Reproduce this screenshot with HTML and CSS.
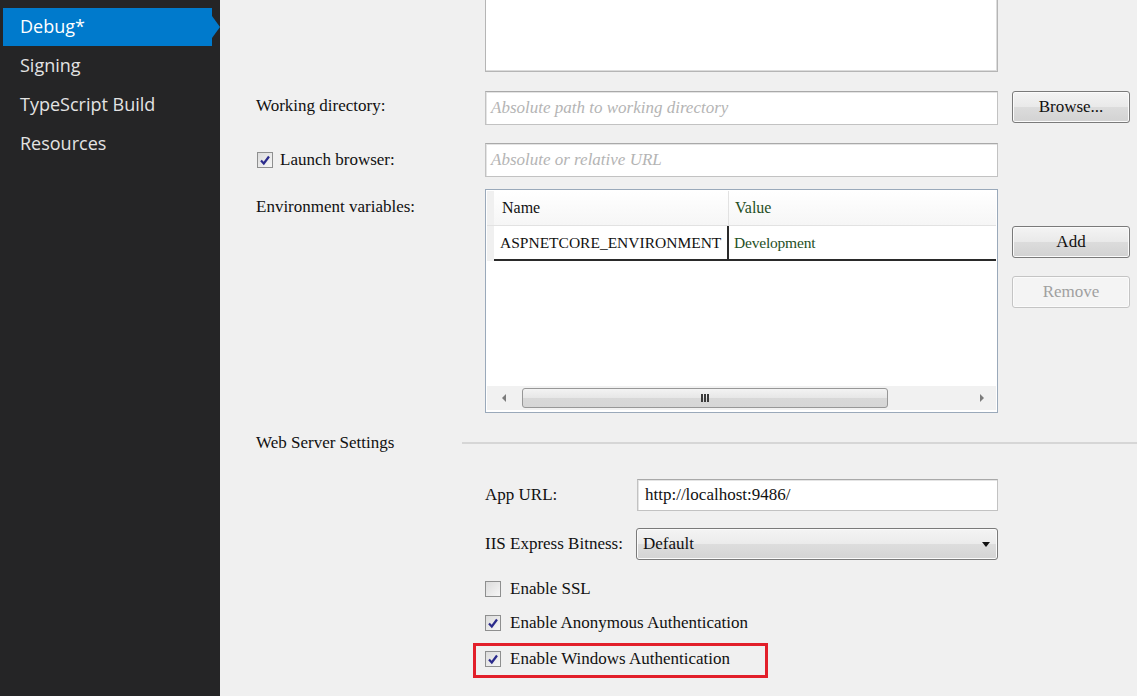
FILE: index.html
```html
<!DOCTYPE html>
<html lang="en">
<head>
    <meta charset="UTF-8">
    <title>Debug Properties</title>
    <link rel="stylesheet" href="styles.css">
</head>
<body>
    <div class="app">
        <nav class="sidebar">
            <div class="nav-item active">Debug*</div>
            <div class="nav-item">Signing</div>
            <div class="nav-item">TypeScript Build</div>
            <div class="nav-item">Resources</div>
        </nav>

        <main class="panel">
            <div class="row row-top">
                <span></span>
                <div class="textbox tall"></div>
            </div>

            <div class="row row-dir">
                <div class="label">Working directory:</div>
                <div class="textbox"><span class="placeholder">Absolute path to working directory</span></div>
                <div class="side"><button class="button">Browse...</button></div>
            </div>

            <div class="row row-launch">
                <div class="label check-label">
                    <span class="checkbox checked small-gap">
                        <svg viewBox="0 0 16 16" width="16" height="16"><path d="M4 8.5 L6.8 11.5 L12 4.5" fill="none" stroke="#2b2b8c" stroke-width="2.2"/></svg>
                    </span>
                    Launch browser:
                </div>
                <div class="textbox"><span class="placeholder">Absolute or relative URL</span></div>
            </div>

            <div class="row row-env">
                <div class="label env-label">Environment variables:</div>
                <div class="grid-box">
                    <div class="grid-head">
                        <div class="rowhead"></div>
                        <div class="cell name">Name</div>
                        <div class="cell value">Value</div>
                    </div>
                    <div class="grid-row">
                        <div class="rowhead"></div>
                        <div class="cell name">ASPNETCORE_ENVIRONMENT</div>
                        <div class="cell value">Development</div>
                    </div>
                    <div class="grid-empty"></div>
                    <div class="hscroll">
                        <span class="arrow left"></span>
                        <div class="thumb"><span class="grip"></span></div>
                        <span class="arrow right"></span>
                    </div>
                </div>
                <div class="side side-stack">
                    <button class="button">Add</button>
                    <button class="button" disabled>Remove</button>
                </div>
            </div>

            <div class="section">
                <div class="section-title">Web Server Settings</div>
                <div class="section-line"></div>
            </div>

            <div class="row row-url">
                <span></span>
                <div class="sub">
                    <div class="sub-label">App URL:</div>
                    <div class="textbox short">http://localhost:9486/</div>
                </div>
            </div>

            <div class="row row-bitness">
                <span></span>
                <div class="sub">
                    <div class="sub-label">IIS Express Bitness:</div>
                    <div class="select">Default<span class="caret"></span></div>
                </div>
            </div>

            <div class="row row-checks">
                <span></span>
                <div class="checks">
                    <div class="check-row">
                        <span class="checkbox"></span>
                        Enable SSL
                    </div>
                    <div class="check-row">
                        <span class="checkbox checked">
                            <svg viewBox="0 0 16 16" width="16" height="16"><path d="M4 8.5 L6.8 11.5 L12 4.5" fill="none" stroke="#2b2b8c" stroke-width="2.2"/></svg>
                        </span>
                        Enable Anonymous Authentication
                    </div>
                    <div class="check-row highlight">
                        <span class="checkbox checked">
                            <svg viewBox="0 0 16 16" width="16" height="16"><path d="M4 8.5 L6.8 11.5 L12 4.5" fill="none" stroke="#2b2b8c" stroke-width="2.2"/></svg>
                        </span>
                        Enable Windows Authentication
                    </div>
                </div>
            </div>
        </main>
    </div>
</body>
</html>
```

FILE: styles.css
```css
body {
    margin: 0;
    background: #f0f0f0;
    overflow: hidden;
}

.app {
    display: flex;
    height: 696px;
}

/* left navigation */
.sidebar {
    width: 220px;
    flex: none;
    background: #252526;
    padding-top: 8px;
    font-family: "Open Sans", "Noto Sans", sans-serif;
    font-size: 18px;
    color: #e3e3e3;
}

.nav-item {
    height: 38px;
    line-height: 37px;
    padding-left: 17px;
    margin-left: 3px;
    width: 209px;
    box-sizing: border-box;
    margin-bottom: 1px;
    position: relative;
}

.nav-item.active {
    background: #007acc;
    color: #ffffff;
}

.nav-item.active::after {
    content: "";
    position: absolute;
    right: -8px;
    top: 8px;
    border-left: 8px solid #007acc;
    border-top: 11px solid transparent;
    border-bottom: 11px solid transparent;
}

/* property panel */
.panel {
    flex: 1;
    padding-left: 36px;
    font-family: "Liberation Serif", "Times New Roman", serif;
    font-size: 17px;
    color: #111;
}

.row {
    display: grid;
    grid-template-columns: 229px 513px 132px;
    align-items: start;
}

.label {
    line-height: 30px;
    white-space: nowrap;
}

.env-label {
    padding-top: 3px;
}

.check-label {
    display: flex;
    align-items: center;
    height: 34px;
    margin-left: 1px;
}

.textbox {
    height: 34px;
    box-sizing: border-box;
    background: #fff;
    border: 1px solid #c2c2c2;
    border-top-color: #a9a9a9;
    box-shadow: inset 1px 1px 0 #e4e4e4;
    padding: 0 5px;
    display: flex;
    align-items: center;
    white-space: nowrap;
}

.textbox.tall {
    height: 72px;
    border-top: none;
    border-color: #b5b5b5;
    box-shadow: inset -1px -1px 0 #dcdcdc;
}

.placeholder {
    font-style: italic;
    color: #b4b4b4;
}

.row-dir { margin-top: 19px; }
.row-launch { margin-top: 18px; }
.row-env { margin-top: 12px; }

.side {
    padding-left: 14px;
}

.side-stack {
    display: flex;
    flex-direction: column;
    gap: 18px;
    padding-top: 37px;
}

.button {
    width: 118px;
    height: 32px;
    border: 1px solid #7a7a7a;
    border-radius: 3px;
    background: linear-gradient(#f4f4f4, #e9e9e9 50%, #dcdcdc 51%, #d2d2d2);
    box-shadow: inset 0 0 0 1px #fbfbfb;
    font-family: "Liberation Serif", "Times New Roman", serif;
    font-size: 17px;
    color: #111;
    padding: 0;
}

.button:disabled {
    border-color: #c4c4c4;
    background: #f4f4f4;
    color: #a0a0a0;
}

/* environment grid */
.grid-box {
    height: 224px;
    box-sizing: border-box;
    border: 1px solid #9aa9ba;
    background: #fff;
    display: flex;
    flex-direction: column;
    padding: 1px;
}

.grid-head,
.grid-row {
    display: grid;
    grid-template-columns: 7px 235px 1fr;
}

.grid-head {
    height: 34px;
    background: linear-gradient(#ffffff, #f6f6f6);
    border-bottom: 1px solid #e2e2e2;
}

.grid-row {
    height: 35px;
}

.rowhead {
    background: #f0f0f0;
}

.cell {
    display: flex;
    align-items: center;
    white-space: nowrap;
    font-size: 16px;
}

.grid-head .name {
    padding-left: 8px;
    border-right: 1px solid #e2e2e2;
}

.grid-head .value {
    padding-left: 6px;
}

.grid-row .name {
    padding-left: 6px;
    border-right: 2px solid #2a2a2a;
    border-bottom: 2px solid #2a2a2a;
    font-size: 15.5px;
}

.grid-row .value {
    padding-left: 5px;
    border-bottom: 2px solid #2a2a2a;
    font-size: 15.5px;
    letter-spacing: -0.2px;
}

.value {
    color: #1f4f25;
}

.grid-empty {
    flex: 1;
}

.hscroll {
    height: 24px;
    background: #f1f1f1;
    display: flex;
    align-items: center;
    margin-bottom: 1px;
}

.arrow {
    width: 0;
    height: 0;
    border-top: 4px solid transparent;
    border-bottom: 4px solid transparent;
}

.arrow.left {
    border-right: 4px solid #7c7c7c;
    margin-left: 15px;
    margin-right: 16px;
}

.arrow.right {
    border-left: 4px solid #7c7c7c;
    margin-left: auto;
    margin-right: 12px;
}

.thumb {
    width: 366px;
    height: 20px;
    box-sizing: border-box;
    border: 1px solid #979797;
    border-radius: 3px;
    background: linear-gradient(#f3f3f3, #e6e6e6 50%, #d8d8d8 51%, #d6d6d6);
    display: flex;
    justify-content: center;
    align-items: center;
}

.grip {
    width: 8px;
    height: 8px;
    background: repeating-linear-gradient(90deg, #3a3a3a 0 2px, transparent 2px 3px);
}

/* web server settings */
.section {
    display: grid;
    grid-template-columns: 206px 1fr;
    align-items: center;
    margin-top: 20px;
    height: 20px;
}

.section-line {
    height: 2px;
    background: #d6d6d6;
}

.sub {
    display: grid;
    grid-template-columns: 152px 1fr;
    align-items: center;
}

.sub-label {
    white-space: nowrap;
}

.row-url { margin-top: 26px; }
.row-bitness { margin-top: 17px; }

.textbox.short {
    height: 32px;
    padding-left: 7px;
}

.row-bitness .sub {
    grid-template-columns: 151px 1fr;
}

.select {
    height: 32px;
    box-sizing: border-box;
    border: 1px solid #7a7a7a;
    border-radius: 3px;
    background: linear-gradient(#f4f4f4, #ebebeb 50%, #dddddd 51%, #d4d4d4);
    box-shadow: inset 0 0 0 1px #fbfbfb;
    display: flex;
    align-items: center;
    padding-left: 6px;
}

.caret {
    margin-left: auto;
    margin-right: 7px;
    border-top: 5px solid #111;
    border-left: 4px solid transparent;
    border-right: 4px solid transparent;
}

/* checkboxes */
.row-checks { margin-top: 19px; }

.checks {
    display: flex;
    flex-direction: column;
}

.check-row {
    display: flex;
    align-items: center;
    height: 20px;
    white-space: nowrap;
}

.check-row + .check-row {
    margin-top: 14px;
}

.checkbox {
    width: 16px;
    height: 16px;
    box-sizing: border-box;
    border: 1px solid #8e8f8f;
    background: linear-gradient(135deg, #dcdcdc, #f6f6f6);
    margin-right: 9px;
    display: inline-flex;
    flex: none;
    position: relative;
}

.checkbox svg {
    position: absolute;
    left: -1px;
    top: -1px;
}

.checkbox.small-gap {
    margin-right: 7px;
}

.check-row.highlight {
    margin-top: 10px;
    margin-left: -12px;
    width: 295px;
    height: 35px;
    box-sizing: border-box;
    border: 3px solid #e21f2a;
    padding: 0 0 3px 9px;
}
```
